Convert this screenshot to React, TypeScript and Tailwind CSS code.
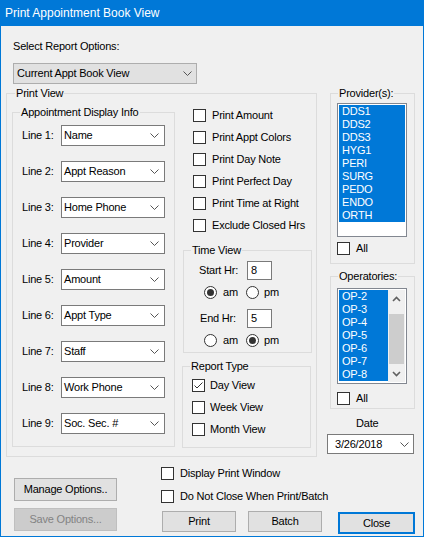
import type { ReactNode } from "react"

const lines = [
  "Name",
  "Appt Reason",
  "Home Phone",
  "Provider",
  "Amount",
  "Appt Type",
  "Staff",
  "Work Phone",
  "Soc. Sec. #",
]

const printFlags = [
  "Print Amount",
  "Print Appt Colors",
  "Print Day Note",
  "Print Perfect Day",
  "Print Time at Right",
  "Exclude Closed Hrs",
]

const providers = ["DDS1", "DDS2", "DDS3", "HYG1", "PERI", "SURG", "PEDO", "ENDO", "ORTH"]
const operatories = ["OP-2", "OP-3", "OP-4", "OP-5", "OP-6", "OP-7", "OP-8"]

function Chevron() {
  return (
    <svg width="9" height="5" viewBox="0 0 9 5" className="shrink-0">
      <path d="M0.5 0.5 L4.5 4.5 L8.5 0.5" fill="none" stroke="#555" strokeWidth="1" />
    </svg>
  )
}

function Checkbox({ checked = false }: { checked?: boolean }) {
  return (
    <span className="flex h-[13px] w-[13px] shrink-0 items-center justify-center border border-[#333] bg-white">
      {checked && (
        <svg width="11" height="11" viewBox="0 0 11 11">
          <path d="M1.5 5.5 L4 8 L9.5 2.5" fill="none" stroke="#333" strokeWidth="1" />
        </svg>
      )}
    </span>
  )
}

function Radio({ checked = false }: { checked?: boolean }) {
  return (
    <span className="flex h-[13px] w-[13px] shrink-0 items-center justify-center rounded-full border border-[#333] bg-white">
      {checked && <span className="h-[7px] w-[7px] rounded-full bg-[#333]" />}
    </span>
  )
}

// groupbox: caption sits on top of the border line
function Group({
  label,
  className,
  labelClass,
  children,
}: {
  label: string
  className: string
  labelClass: string
  children?: ReactNode
}) {
  return (
    <div className={"relative shrink-0 border border-[#dcdcdc] " + className}>
      <span className={"absolute -top-[9px] bg-[#f0f0f0] px-[1px] leading-[16px] " + labelClass}>
        {label}
      </span>
      {children}
    </div>
  )
}

function Button({ children, className }: { children: ReactNode; className: string }) {
  return (
    <div className={"flex shrink-0 items-center justify-center " + className}>{children}</div>
  )
}

export default function App() {
  return (
    <div className="flex h-[537px] w-[424px] flex-col overflow-hidden whitespace-nowrap border-x border-b border-[#0078d7] bg-[#f0f0f0] font-['Liberation_Sans',Arial,sans-serif] text-[11px] leading-[15px] tracking-[-0.2px] text-black">
      <div className="flex h-[26px] shrink-0 items-center bg-[#0078d7] pl-[4px] text-[12px] tracking-normal text-white">
        Print Appointment Book View
      </div>

      <div className="flex flex-col pl-[5px]">
        <div className="ml-[7px] mt-[13px] h-[15px]">Select Report Options:</div>
        <div className="ml-[7px] mt-[9px] flex h-[21px] w-[184px] items-center justify-between border border-[#adadad] bg-[#e1e1e1] pl-[3px] pr-[4px]">
          <span>Current Appt Book View</span>
          <Chevron />
        </div>

        {/* main row */}
        <div className="mt-[9px] flex items-start">
          <Group label="Print View" className="flex h-[364px] w-[311px] items-start pl-[5px]" labelClass="left-[8px]">
            <Group
              label="Appointment Display Info"
              className="mt-[18px] flex h-[335px] w-[163px] flex-col gap-[15px] pl-[9px] pt-[12px]"
              labelClass="left-[7px]"
            >
              {lines.map((value, i) => (
                <div key={i} className="flex h-[21px] items-center">
                  <span className="w-[39px]">Line {i + 1}:</span>
                  <div className="flex h-[21px] w-[104px] items-center justify-between border border-[#7a7a7a] bg-white pl-[2px] pr-[5px]">
                    <span>{value}</span>
                    <Chevron />
                  </div>
                </div>
              ))}
            </Group>

            <div className="ml-[8px] flex w-[129px] flex-col">
              <div className="mt-[10px] flex flex-col pl-[10px]">
                {printFlags.map((f) => (
                  <div key={f} className="flex h-[22px] items-center gap-[6px]">
                    <Checkbox />
                    <span>{f}</span>
                  </div>
                ))}
              </div>

              <Group label="Time View" className="mt-[14px] flex h-[103px] w-[129px] flex-col pl-[15px]" labelClass="left-[7px]">
                <div className="mt-[10px] flex items-center">
                  <span className="w-[48px]">Start Hr:</span>
                  <div className="flex h-[19px] w-[25px] items-center border border-[#7a7a7a] bg-white pl-[3px]">8</div>
                </div>
                <div className="ml-[5px] mt-[6px] flex h-[13px] items-center">
                  <Radio checked />
                  <span className="ml-[6px] w-[23px]">am</span>
                  <Radio />
                  <span className="ml-[5px]">pm</span>
                </div>
                <div className="mt-[10px] flex items-center">
                  <span className="w-[48px] pl-px">End Hr:</span>
                  <div className="flex h-[19px] w-[25px] items-center border border-[#7a7a7a] bg-white pl-[3px]">5</div>
                </div>
                <div className="ml-[5px] mt-[6px] flex h-[13px] items-center">
                  <Radio />
                  <span className="ml-[6px] w-[23px]">am</span>
                  <Radio checked />
                  <span className="ml-[5px]">pm</span>
                </div>
              </Group>

              <Group label="Report Type" className="-ml-px mt-[13px] flex h-[82px] w-[129px] flex-col pl-[9px] pt-[7px]" labelClass="left-[7px]">
                {[
                  ["Day View", true],
                  ["Week View", false],
                  ["Month View", false],
                ].map(([label, on]) => (
                  <div key={label as string} className="flex h-[22px] items-center gap-[5px]">
                    <Checkbox checked={on as boolean} />
                    <span>{label}</span>
                  </div>
                ))}
              </Group>
            </div>
          </Group>

          {/* right column */}
          <div className="ml-[13px] flex w-[85px] flex-col">
            <Group label="Provider(s):" className="flex h-[171px] w-[85px] flex-col pl-[6px]" labelClass="left-[7px]">
              <div className="mt-[9px] h-[134px] w-[70px] border border-[#828790] bg-white p-px">
                {providers.map((p) => (
                  <div key={p} className="h-[13px] bg-[#0078d7] pl-[3px] leading-[13px] text-white">
                    {p}
                  </div>
                ))}
              </div>
              <div className="mt-[4px] flex items-center gap-[6px]">
                <Checkbox />
                <span>All</span>
              </div>
            </Group>

            <Group label="Operatories:" className="mt-[12px] flex h-[133px] w-[85px] flex-col pl-[6px]" labelClass="left-[7px]">
              <div className="mt-[11px] flex h-[96px] w-[70px] border border-[#828790] bg-white p-px">
                <div className="flex-1">
                  {operatories.map((o) => (
                    <div key={o} className="h-[13px] bg-[#0078d7] pl-[3px] leading-[13px] text-white">
                      {o}
                    </div>
                  ))}
                </div>
                <div className="flex w-[17px] flex-col items-center bg-[#f0f0f0]">
                  <div className="flex h-[17px] items-center justify-center">
                    <svg width="9" height="6" viewBox="0 0 9 6">
                      <path d="M1 5 L4.5 1.5 L8 5" fill="none" stroke="#606060" strokeWidth="1.6" />
                    </svg>
                  </div>
                  <div className="mt-[7px] h-[50px] w-[15px] bg-[#cdcdcd]" />
                  <div className="mt-auto flex h-[17px] items-center justify-center">
                    <svg width="9" height="6" viewBox="0 0 9 6">
                      <path d="M1 1 L4.5 4.5 L8 1" fill="none" stroke="#606060" strokeWidth="1.6" />
                    </svg>
                  </div>
                </div>
              </div>
              <div className="mt-[7px] flex items-center gap-[6px]">
                <Checkbox />
                <span>All</span>
              </div>
            </Group>

            <div className="ml-[26px] mt-[7px] h-[15px]">Date</div>
            <div className="-ml-[3px] mt-[3px] flex h-[20px] w-[87px] items-center justify-between border border-[#7a7a7a] bg-white pl-[7px] pr-[4px]">
              <span>3/26/2018</span>
              <Chevron />
            </div>
          </div>
        </div>

        {/* bottom */}
        <div className="flex items-start">
          <div className="ml-[8px] mt-[21px] flex flex-col gap-[7px]">
            <Button className="h-[23px] w-[103px] border border-[#adadad] bg-[#e1e1e1]">Manage Options..</Button>
            <Button className="h-[23px] w-[103px] border border-[#bfbfbf] bg-[#cccccc] text-[#838383]">Save Options...</Button>
          </div>
          <div className="ml-[44px] mt-[9px] flex flex-col">
            <div className="flex items-center gap-[6px]">
              <Checkbox />
              <span>Display Print Window</span>
            </div>
            <div className="mt-[8px] flex items-center gap-[6px]">
              <Checkbox />
              <span>Do Not Close When Print/Batch</span>
            </div>
            <div className="mt-[7px] flex items-start">
              <Button className="ml-px h-[21px] w-[74px] border border-[#adadad] bg-[#e1e1e1]">Print</Button>
              <Button className="ml-[12px] h-[21px] w-[74px] border border-[#adadad] bg-[#e1e1e1]">Batch</Button>
              <Button className="ml-[16px] mt-px h-[22px] w-[77px] border-2 border-[#0078d7] bg-[#e1e1e1]">Close</Button>
            </div>
          </div>
        </div>
      </div>
    </div>
  )
}
